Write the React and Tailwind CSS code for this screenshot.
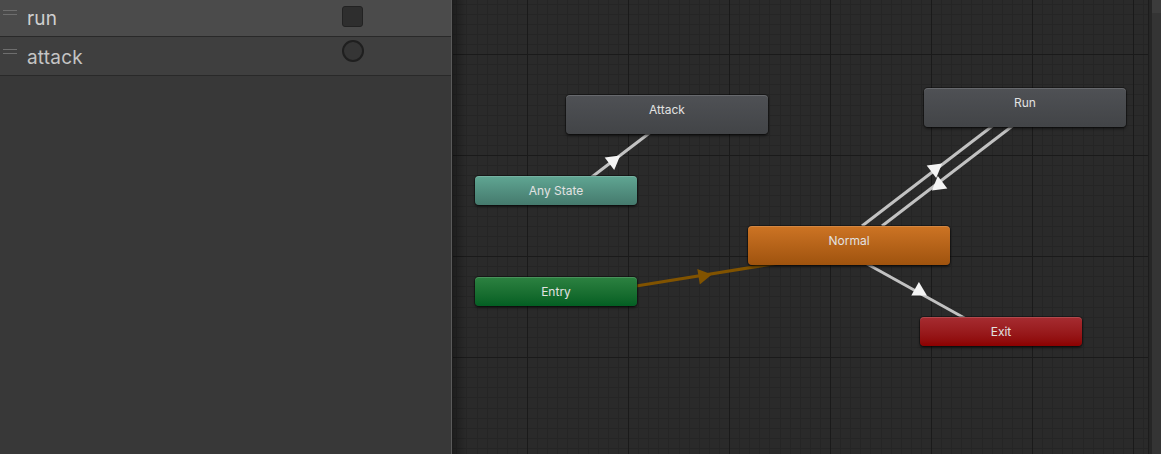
import React from 'react';

const PARAMS = [
  { name: 'run', kind: 'bool', rowBg: 'bg-[#4b4b4b]', text: 'text-[#cfcfcf]' },
  { name: 'attack', kind: 'trigger', rowBg: 'bg-[#3f3f3f]', text: 'text-[#c4c4c4]' },
];

const NODES = [
  { label: 'Attack', big: true, pos: 'left-[113px] top-[95px]', color: 'from-[#4f5155] to-[#424447]' },
  { label: 'Run', big: true, pos: 'left-[471px] top-[88px]', color: 'from-[#4f5155] to-[#424447]' },
  { label: 'Normal', big: true, pos: 'left-[295px] top-[226px]', color: 'from-[#cd7424] to-[#9f530e]' },
  { label: 'Any State', pos: 'left-[22px] top-[176px]', color: 'from-[#60a693] to-[#457a6d]' },
  { label: 'Entry', pos: 'left-[22px] top-[277px]', color: 'from-[#2c8241] to-[#035f23]' },
  { label: 'Exit', pos: 'left-[467px] top-[317px]', color: 'from-[#a62c31] to-[#8c0101]' },
];

// page coordinates, the svg viewBox starts at x=453
const EDGES = [
  { from: [584, 183], to: [656, 128], color: '#c2c2c2', arrow: [613, 161], dir: 1 },
  { from: [862, 226], to: [995, 124], color: '#c2c2c2', arrow: [935, 169], dir: 1 },
  { from: [882, 226], to: [1015, 124], color: '#c2c2c2', arrow: [939, 185], dir: -1 },
  { from: [860, 260], to: [968, 320], color: '#c2c2c2', arrow: [919, 291], dir: 1 },
  { from: [630, 287], to: [785, 262], color: '#815300', arrow: [703, 276], dir: 1 },
];

function triangle([cx, cy], angle, r = 9) {
  return [0, 120, 240]
    .map((d) => {
      const a = angle + (d * Math.PI) / 180;
      return `${(cx + r * Math.cos(a)).toFixed(1)},${(cy + r * Math.sin(a)).toFixed(1)}`;
    })
    .join(' ');
}

function Grid() {
  const minor = [];
  const major = [];
  for (let k = -8; k <= 62; k++) {
    const x = Math.round(527 + 10.1 * k) + 0.5;
    const isMajor = ((k % 10) + 10) % 10 === 0;
    (isMajor ? major : minor).push(<line key={'x' + k} x1={x} y1={0} x2={x} y2={454} />);
  }
  for (let k = -6; k <= 40; k++) {
    const y = Math.round(54 + 10.1 * k) + 0.5;
    const isMajor = ((k % 10) + 10) % 10 === 0;
    (isMajor ? major : minor).push(<line key={'y' + k} x1={453} y1={y} x2={1148} y2={y} />);
  }
  return (
    <>
      <g stroke="#252525" strokeWidth="1">{minor}</g>
      <g stroke="#1a1a1a" strokeWidth="1">{major}</g>
    </>
  );
}

function Edges() {
  return (
    <>
      {EDGES.map((e, i) => {
        const dx = e.to[0] - e.from[0];
        const dy = e.to[1] - e.from[1];
        const angle = Math.atan2(dy, dx) + (e.dir < 0 ? Math.PI : 0);
        return (
          <g key={i}>
            <line x1={e.from[0]} y1={e.from[1]} x2={e.to[0]} y2={e.to[1]} stroke={e.color} strokeWidth="3" />
            <polygon points={triangle(e.arrow, angle)} fill={e.color === '#c2c2c2' ? '#f4f4f4' : e.color} />
          </g>
        );
      })}
    </>
  );
}

function StateNode({ node }) {
  const size = node.big ? 'w-[202px] h-[39px] pt-[6.5px] items-start' : 'w-[162px] h-[29px] items-center';
  return (
    <div
      className={`absolute ${node.pos} ${size} flex justify-center rounded-[4px] bg-linear-to-b ${node.color} shadow-[0_0_0_1px_rgba(0,0,0,0.35),0_2px_3px_rgba(0,0,0,0.5),inset_0_1px_0_rgba(255,255,255,0.14)]`}
    >
      <span className="text-[12px] leading-4 text-[#e2e2e2]">{node.label}</span>
    </div>
  );
}

export default function App() {
  return (
    <div className="flex h-[454px] w-[1161px] overflow-hidden bg-[#383838] font-['Inter','Noto_Sans',sans-serif]">
      {/* Parameters list */}
      <aside className="w-[452px] shrink-0 border-r border-[#5a5a5a] bg-[#383838]">
        <div className="-mt-[2px]">
          {PARAMS.map((p) => (
            <div key={p.name} className={`flex h-[39px] items-start border-b border-[#292929] ${p.rowBg}`}>
              <div className="ml-[3px] mt-[12px] flex w-[14px] flex-col gap-[3px]">
                <div className="h-px bg-[#6e6e6e]" />
                <div className="h-px bg-[#6e6e6e]" />
              </div>
              <span className={`ml-[10px] flex-1 text-[19px] leading-[41px] tracking-[0.2px] ${p.text}`}>{p.name}</span>
              {p.kind === 'bool' ? (
                <div className="mr-[88px] mt-[8px] h-[21px] w-[21px] rounded-[3px] border border-[#222] bg-[#2e2e2e]" />
              ) : (
                <div className="mr-[87px] mt-[3px] h-[22px] w-[22px] rounded-full border-2 border-[#1f1f1f] bg-[#353535]" />
              )}
            </div>
          ))}
        </div>
      </aside>
      <div className="w-px shrink-0 bg-[#1c1c1c]" />

      {/* Graph canvas */}
      <main className="relative h-full w-[695px] shrink-0 overflow-hidden bg-[#2a2a2a]">
        <svg className="absolute inset-0" width="695" height="454" viewBox="453 0 695 454">
          <Grid />
          <Edges />
        </svg>
        <div className="pointer-events-none absolute inset-y-0 left-0 w-[14px] bg-linear-to-r from-black/30 to-transparent" />
        {NODES.map((n) => (
          <StateNode key={n.label} node={n} />
        ))}
      </main>

      {/* Right edge */}
      <div className="w-px shrink-0 bg-[#1c1c1c]" />
      <div className="w-[3px] shrink-0 bg-[#262626]" />
      <div className="flex w-[9px] shrink-0 flex-col bg-[#343434]">
        <div className="h-[13px] bg-[#3c3c3c]" />
      </div>
    </div>
  );
}
